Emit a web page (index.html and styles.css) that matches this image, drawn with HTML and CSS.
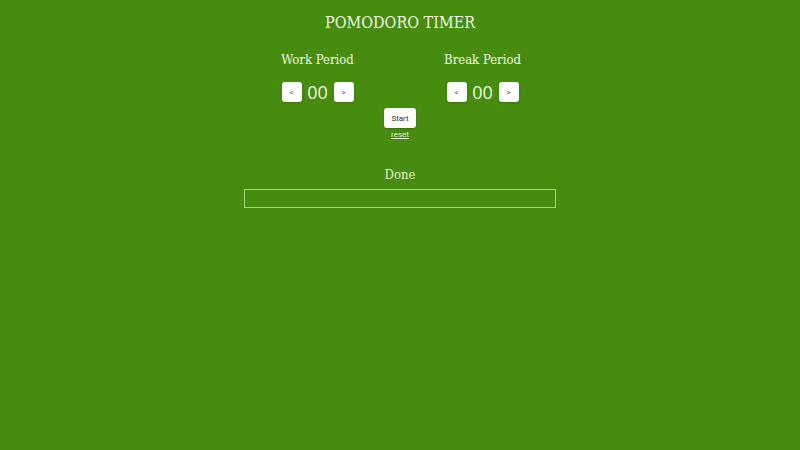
FILE: index.html
```html
<!DOCTYPE html>
<html lang="en">
<head>
    <meta charset="UTF-8">
    <meta name="viewport" content="width=device-width, initial-scale=1.0">
    <title>Pomodoro Timer</title>
<link rel="stylesheet" href="styles.css">
</head>

<body>
    <div class="app">
        <h1 class="title">POMODORO TIMER</h1>

        <div class="periods">
            <div class="period">
                <h2>Work Period</h2>
                <div class="stepper">
                    <button class="step" id="workDown">&lt;</button>
                    <span class="value" id="workValue">00</span>
                    <button class="step" id="workUp">&gt;</button>
                </div>
            </div>

            <div class="period">
                <h2>Break Period</h2>
                <div class="stepper">
                    <button class="step" id="breakDown">&lt;</button>
                    <span class="value" id="breakValue">00</span>
                    <button class="step" id="breakUp">&gt;</button>
                </div>
            </div>
        </div>

        <div class="controls">
            <button class="start" id="start">Start</button>
            <a href="#" class="reset" id="reset">reset</a>
        </div>

        <div class="status" id="status">Done</div>
        <div class="progress"><div class="progress-fill" id="fill"></div></div>
    </div>
</body>
</html>
```

FILE: styles.css
```css
* {
    margin: 0;
    padding: 0;
    box-sizing: border-box;
}

body {
    background-color: #468c0e;
    color: #eef8e2;
    font-family: "DejaVu Serif", serif;
    font-stretch: condensed;
}

.app {
    width: 312px;
    margin: 0 auto;
    padding-top: 12px;
    display: flex;
    flex-direction: column;
    align-items: center;
}

.title {
    font-size: 16px;
    font-weight: normal;
    line-height: 22px;
}

/* Work / break columns */
.periods {
    display: flex;
    justify-content: center;
    gap: 15px;
    margin-top: 16px;
}

.period {
    width: 150px;
    display: flex;
    flex-direction: column;
    align-items: center;
}

.period h2 {
    font-size: 13px;
    font-weight: normal;
    line-height: 20px;
}

.stepper {
    display: flex;
    align-items: center;
    gap: 5px;
    margin-top: 12px;
}

.step {
    width: 20px;
    height: 20px;
    border: none;
    border-radius: 3px;
    background: white;
    color: #555;
    font-family: Roboto, sans-serif;
    font-size: 8px;
    box-shadow: 0 1px 2px rgba(0, 0, 0, 0.2);
}

.value {
    font-family: "Open Sans", sans-serif;
    font-stretch: normal;
    font-size: 18px;
    line-height: 20px;
    color: #eef8e0;
    width: 22px;
    text-align: center;
}

/* Start / reset */
.controls {
    display: flex;
    flex-direction: column;
    align-items: center;
    margin-top: 6px;
}

.start {
    width: 32px;
    height: 20px;
    border: none;
    border-radius: 3px;
    background: white;
    color: #333;
    font-family: Roboto, sans-serif;
    font-size: 8px;
    box-shadow: 0 1px 2px rgba(0, 0, 0, 0.2);
}

.reset {
    margin-top: 2px;
    font-family: Roboto, sans-serif;
    font-stretch: normal;
    font-size: 8px;
    color: #e4f4cc;
}

.status {
    margin-top: 26px;
    font-size: 13px;
    line-height: 20px;
    color: #e4f4c8;
}

.progress {
    width: 312px;
    height: 19px;
    margin-top: 4px;
    border: 1px solid #a8d488;
}

.progress-fill {
    width: 0;
    height: 100%;
    background: #a8d488;
}
```
